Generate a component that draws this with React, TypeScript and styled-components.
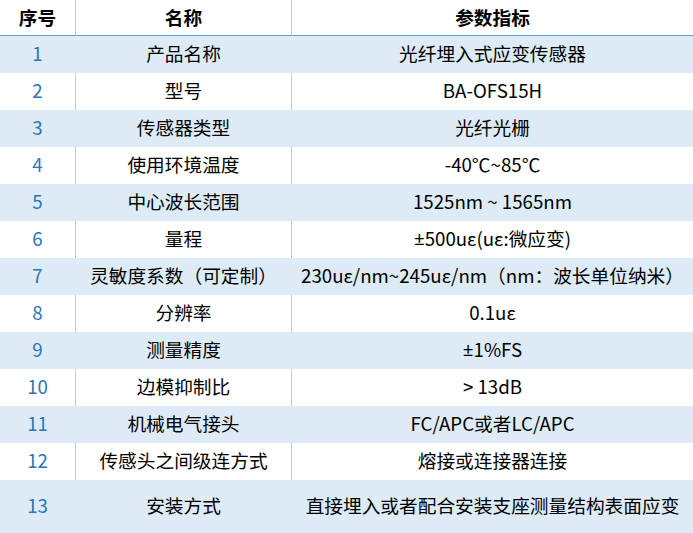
import React from 'react';
import styled, { createGlobalStyle } from 'styled-components';

const blueFill = '#ddebf7';
const headerLine = '#5b9bd5';
const gridLine = '#c3cad6';
const numberBlue = '#2e75b6';

const GlobalStyle = createGlobalStyle`
  html, body {
    margin: 0;
    padding: 0;
    background: #ffffff;
  }

  body {
    font-family: 'Noto Sans CJK SC', 'Noto Sans', sans-serif;
    color: #000000;
  }
`;

const Table = styled.div`
  width: 693px;
  height: 533px;
  display: grid;
  grid-template-columns: 75px 216px 1fr;
  grid-template-rows: 36px repeat(12, 37px) 1fr;
  overflow: hidden;
`;

const HeadCell = styled.div<{ $divider?: boolean }>`
  display: flex;
  align-items: center;
  justify-content: center;
  font-size: 18.7px;
  font-weight: bold;
  border-bottom: 1px solid ${headerLine};
  border-left: ${p => (p.$divider ? `1px solid ${gridLine}` : 'none')};
  padding-bottom: 3px;
`;

const Cell = styled.div<{ $striped: boolean; $divider?: boolean; $number?: boolean }>`
  display: flex;
  align-items: center;
  justify-content: center;
  white-space: nowrap;
  font-size: 18.7px;
  padding-bottom: 4px;
  background: ${p => (p.$striped ? blueFill : '#ffffff')};
  color: ${p => (p.$number ? numberBlue : '#000000')};
  border-left: ${p =>
    p.$divider ? `1px solid ${p.$striped ? blueFill : gridLine}` : 'none'};
`;

// the plus-minus sign is half width in the reference
const Sign = styled.span`
  font-family: 'Noto Sans', sans-serif;
`;

const withSign = (text: string) =>
  text.startsWith('±') ? (
    <>
      <Sign>±</Sign>
      {text.slice(1)}
    </>
  ) : (
    text
  );

const rows: [string, string][] = [
  ['产品名称', '光纤埋入式应变传感器'],
  ['型号', 'BA-OFS15H'],
  ['传感器类型', '光纤光栅'],
  ['使用环境温度', '-40℃~85℃'],
  ['中心波长范围', '1525nm ~ 1565nm'],
  ['量程', '±500uε(uε:微应变)'],
  ['灵敏度系数（可定制）', '230uε/nm~245uε/nm（nm：波长单位纳米）'],
  ['分辨率', '0.1uε'],
  ['测量精度', '±1%FS'],
  ['边模抑制比', '> 13dB'],
  ['机械电气接头', 'FC/APC或者LC/APC'],
  ['传感头之间级连方式', '熔接或连接器连接'],
  ['安装方式', '直接埋入或者配合安装支座测量结构表面应变'],
];

const App = () => (
  <>
    <GlobalStyle />
    <Table>
      <HeadCell>序号</HeadCell>
      <HeadCell $divider>名称</HeadCell>
      <HeadCell $divider>参数指标</HeadCell>
      {rows.map(([name, value], i) => {
        const striped = i % 2 === 0;
        return (
          <React.Fragment key={i}>
            <Cell $striped={striped} $number>
              {i + 1}
            </Cell>
            <Cell $striped={striped} $divider>
              {name}
            </Cell>
            <Cell $striped={striped} $divider>
              {withSign(value)}
            </Cell>
          </React.Fragment>
        );
      })}
    </Table>
  </>
);

export default App;
